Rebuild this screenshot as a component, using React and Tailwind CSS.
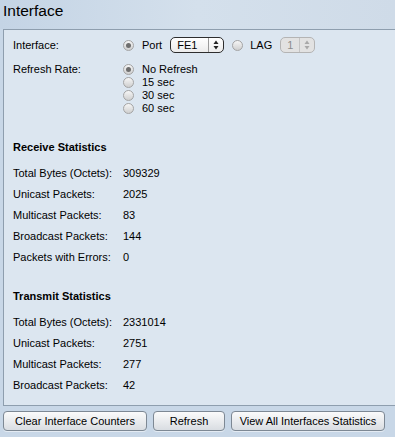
import React from 'react';

const RECEIVE = [
    ['Total Bytes (Octets):', '309329'],
    ['Unicast Packets:', '2025'],
    ['Multicast Packets:', '83'],
    ['Broadcast Packets:', '144'],
    ['Packets with Errors:', '0'],
];

const TRANSMIT = [
    ['Total Bytes (Octets):', '2331014'],
    ['Unicast Packets:', '2751'],
    ['Multicast Packets:', '277'],
    ['Broadcast Packets:', '42'],
];

const Radio = ({ checked }) => (
    <span className="w-[11px] h-[11px] rounded-full border border-[#a4a4a4] bg-gradient-to-b from-[#f6f6f6] to-[#cfcfcf] flex items-center justify-center shrink-0">
        {checked && <span className="w-[5px] h-[5px] rounded-full bg-[#6e6e6e]" />}
    </span>
);

const Arrows = ({ color }) => (
    <svg width="6" height="10" viewBox="0 0 6 10">
        <path d="M3 0.5 L5.5 4 L0.5 4 Z" fill={color} />
        <path d="M3 9.5 L5.5 6 L0.5 6 Z" fill={color} />
    </svg>
);

const Select = ({ value, disabled, width }) => (
    <div
        className={`h-[16px] rounded-[5px] border flex items-center ${disabled ? 'border-[#b4b4b4] bg-[#e2e2e2] text-[#8c8c8c]' : 'border-[#2e2e2e] bg-gradient-to-b from-white to-[#ececec] text-black'}`}
        style={{ width }}
    >
        <span className="flex-1 pl-[6px] leading-none">{value}</span>
        <span className={`h-full w-[15px] flex items-center justify-center border-l ${disabled ? 'border-[#c4c4c4]' : 'border-[#9a9a9a]'}`}>
            <Arrows color={disabled ? '#a8a8a8' : '#222'} />
        </span>
    </div>
);

const StatRows = ({ rows }) => (
    <div className="mt-[8px]">
        {rows.map(([label, value]) => (
            <div key={label} className="h-[21px] flex items-center">
                <span className="w-[110px]">{label}</span>
                <span>{value}</span>
            </div>
        ))}
    </div>
);

const Button = ({ children, width }) => (
    <button
        className="h-[20px] rounded-[4px] border border-[#7d8894] bg-gradient-to-b from-[#fbfbfb] to-[#d9dde2] text-[11px] text-black shadow-[0_1px_0_rgba(255,255,255,0.5)]"
        style={{ width }}
    >
        {children}
    </button>
);

export default function App() {
    return (
        <div className="w-[395px] h-[437px] overflow-hidden bg-[#c8d7e7] text-[11px] text-black" style={{ fontFamily: '"Liberation Sans", Arial, sans-serif' }}>
            <div className="h-[29px] bg-gradient-to-r from-[#c4d4e5] via-[#d4e0ec] to-[#cfdbe8] pl-[3px] pt-[2px]">
                <h1 className="text-[15.5px] leading-[18px]">Interface</h1>
            </div>
            <div className="ml-[3px] border-l border-t border-b border-[#8e9eae] bg-[#dce6f0] h-[377px] pl-[9px]">
                <div className="h-[16px] mt-[7px] flex items-center">
                    <span className="w-[110px]">Interface:</span>
                    <Radio checked />
                    <span className="ml-[8px]">Port</span>
                    <span className="ml-[8px]"><Select value="FE1" width={54} /></span>
                    <span className="ml-[8px]"><Radio /></span>
                    <span className="ml-[7px]">LAG</span>
                    <span className="ml-[8px]"><Select value="1" disabled width={35} /></span>
                </div>
                <div className="mt-[10px] flex">
                    <span className="w-[110px] leading-[13px]">Refresh Rate:</span>
                    <div>
                        {['No Refresh', '15 sec', '30 sec', '60 sec'].map((t, i) => (
                            <div key={t} className="h-[13px] flex items-center">
                                <Radio checked={i === 0} />
                                <span className="ml-[8px]">{t}</span>
                            </div>
                        ))}
                    </div>
                </div>
                <h2 className="mt-[24px] h-[16px] leading-[16px] font-bold">Receive Statistics</h2>
                <StatRows rows={RECEIVE} />
                <h2 className="mt-[20px] h-[16px] leading-[16px] font-bold">Transmit Statistics</h2>
                <StatRows rows={TRANSMIT} />
            </div>
            <div className="mt-[5px] ml-[3px] flex gap-[6px]">
                <Button width={144}>Clear Interface Counters</Button>
                <Button width={72}>Refresh</Button>
                <Button width={154}>View All Interfaces Statistics</Button>
            </div>
        </div>
    );
}
